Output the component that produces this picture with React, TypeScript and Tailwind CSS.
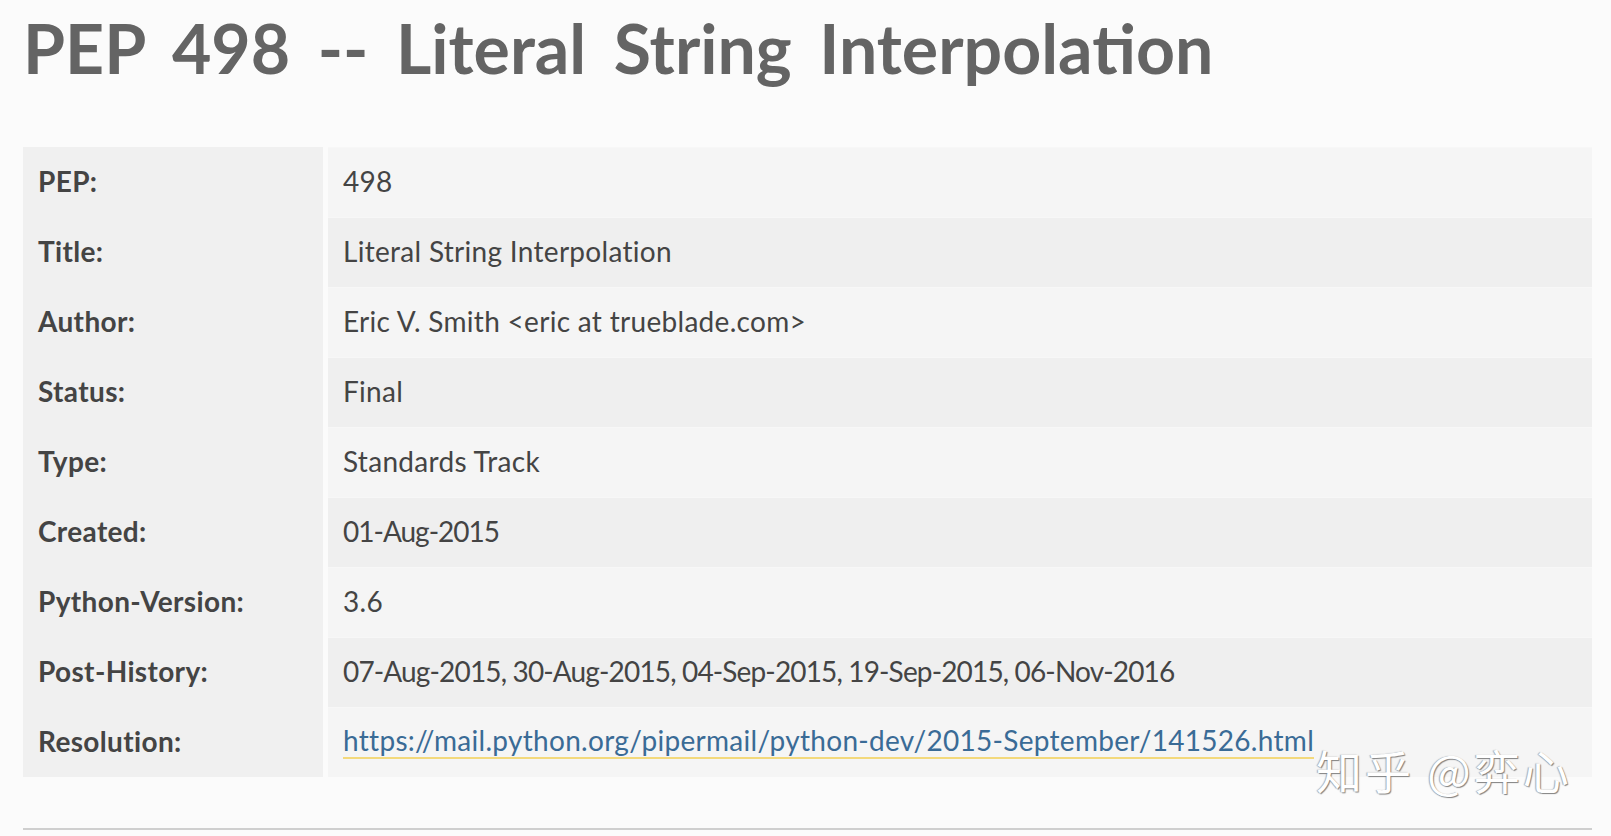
const rows: [string, string, string][] = [
  ["PEP:", "498", ""],
  ["Title:", "Literal String Interpolation", ""],
  ["Author:", "Eric V. Smith <eric at trueblade.com>", ""],
  ["Status:", "Final", ""],
  ["Type:", "Standards Track", ""],
  ["Created:", "01-Aug-2015", "tracking-[-1px]"],
  ["Python-Version:", "3.6", ""],
  ["Post-History:", "07-Aug-2015, 30-Aug-2015, 04-Sep-2015, 19-Sep-2015, 06-Nov-2016", "tracking-[-0.85px]"],
  ["Resolution:", "", ""],
];

const link = "https://mail.python.org/pipermail/python-dev/2015-September/141526.html";

export default function App() {
  return (
    <div
      className="relative h-[836px] w-[1611px] overflow-hidden bg-[#fbfbfb] pl-[23px] pr-[19px]"
      style={{ fontFamily: "Lato, 'Liberation Sans', sans-serif" }}
    >
      <h1 className="pt-[11px] text-[68px] font-bold leading-[74px] text-[#646464] [word-spacing:11px]">
        PEP 498 -- Literal String Interpolation
      </h1>

      <div className="mt-[62px] grid grid-cols-[300px_1fr] gap-x-[5px] text-[28px] text-[#444]">
        {rows.map(([label, value, extra], i) => (
          <div key={label} className="contents">
            <div className="flex h-[70px] items-center bg-[#f0f0f0] pb-[3px] pl-[15px] font-bold tracking-[0.35px]">
              {label}
            </div>
            <div
              className={
                "flex h-[70px] items-center border-t border-[#f7f7f7] pb-[3px] pl-[15px] tracking-[0.3px] " +
                (i % 2 === 0 ? "bg-[#f5f5f5]" : "bg-[#efefef]")
              }
            >
              {value ? (
                <span className={extra}>{value}</span>
              ) : (
                <a className="border-b-2 border-[#f3d97c] leading-[34px] text-[#3a6b96]">{link}</a>
              )}
            </div>
          </div>
        ))}
      </div>

      <div className="mt-[51px] h-[2px] bg-[#cfcfcf]" />

      <div
        className="absolute left-[1316px] top-[735px] text-[46px] tracking-[3px] text-white"
        style={{
          fontFamily: "'Noto Sans CJK SC', sans-serif",
          textShadow: "1px 1px 1px #808080, -1px 0 1px #a8a8a8",
        }}
      >
        知乎 @弈心
      </div>
    </div>
  );
}
